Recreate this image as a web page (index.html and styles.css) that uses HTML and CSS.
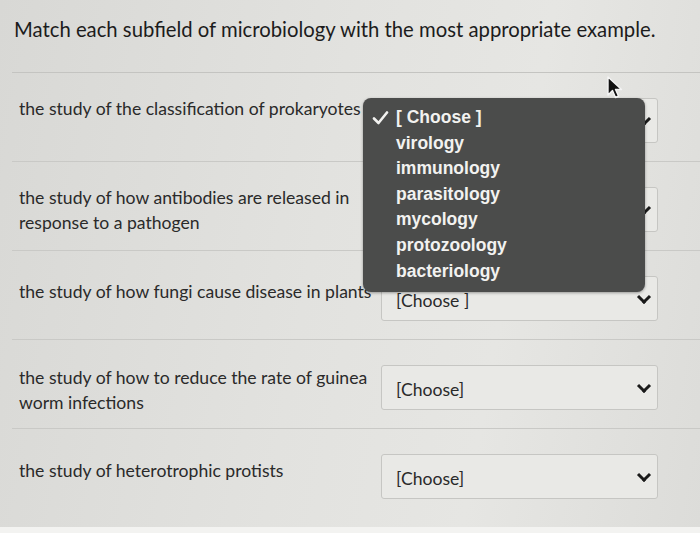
FILE: index.html
```html
<!DOCTYPE html>
<html>
<head>
<meta charset="utf-8">
<link rel="stylesheet" href="styles.css">
</head>
<body>
<div class="page">
  <h1 class="title">Match each subfield of microbiology with the most appropriate example.</h1>
  <div class="list">
    <div class="row">
      <div class="label">the study of the classification of prokaryotes</div>
      <div class="select"><span class="value">[Choose ]</span><span class="chev"></span></div>
    </div>
    <div class="row">
      <div class="label">the study of how antibodies are released in response to a pathogen</div>
      <div class="select"><span class="value">[Choose ]</span><span class="chev"></span></div>
    </div>
    <div class="row">
      <div class="label">the study of how fungi cause disease in plants</div>
      <div class="select"><span class="value">[Choose ]</span><span class="chev"></span></div>
    </div>
    <div class="row">
      <div class="label">the study of how to reduce the rate of guinea worm infections</div>
      <div class="select"><span class="value">[Choose]</span><span class="chev"></span></div>
    </div>
    <div class="row last">
      <div class="label">the study of heterotrophic protists</div>
      <div class="select"><span class="value">[Choose]</span><span class="chev"></span></div>
    </div>
  </div>
  <div class="bottom"></div>

  <ul class="menu">
    <li class="opt"><svg class="check" width="17" height="14" viewBox="0 0 17 14"><path d="M2 7.5 L6.5 12 L15 1.5" fill="none" stroke="#f2f2f0" stroke-width="2.6" stroke-linecap="round" stroke-linejoin="round"/></svg>[ Choose ]</li>
    <li class="opt">virology</li>
    <li class="opt">immunology</li>
    <li class="opt">parasitology</li>
    <li class="opt">mycology</li>
    <li class="opt">protozoology</li>
    <li class="opt">bacteriology</li>
  </ul>

  <svg class="cursor" width="20" height="26" viewBox="0 0 20 26">
    <path d="M3 2 L3 20 L7.5 15.5 L10.5 22.5 L13.5 21 L10.5 14.5 L16.5 14.5 Z" fill="#111" stroke="#f4f4f4" stroke-width="1.4" stroke-linejoin="round"/>
  </svg>
</div>
</body>
</html>
```
FILE: styles.css
```css
html, body {
  margin: 0;
  padding: 0;
}
body {
  width: 700px;
  height: 533px;
  overflow: hidden;
  background: linear-gradient(100deg, #d8d8d5 0%, #e2e2df 45%, #e6e6e3 70%, #dcdcd9 100%);
  font-family: Lato, "Open Sans", sans-serif;
}
.page {
  position: relative;
  height: 533px;
}
.title {
  margin: 0 0 0 12px;
  padding: 17px 0 0 2px;
  height: 73px;
  box-sizing: border-box;
  font-size: 20.3px;
  font-weight: 400;
  color: #1c1c1c;
  border-bottom: 1px solid #c4c4c1;
}
.list {
  padding-left: 12px;
}
.row {
  display: flex;
  align-items: flex-start;
  height: 89px;
  box-sizing: border-box;
  padding: 25px 0 0 7px;
  border-bottom: 1px solid #c9c9c6;
}
.row.last {
  border-bottom: none;
}
.label {
  width: 356px;
  flex: none;
  font-size: 17.6px;
  line-height: 25px;
  color: #2a2a2a;
  margin-right: 6px;
}
.row:nth-child(1) .label { margin-top: -2px; white-space: nowrap; overflow: hidden; }
.row:nth-child(2) .label { margin-top: -2px; }
.row:nth-child(3) .label { margin-top: 3px; white-space: nowrap; overflow: hidden; }
.row:nth-child(4) .label { margin-top: 0; }
.row:nth-child(5) .label { margin-top: 4px; }
.select {
  width: 277px;
  height: 45px;
  box-sizing: border-box;
  border: 1px solid #c6c6c3;
  border-radius: 3px;
  background: #e9e9e6;
  display: flex;
  align-items: center;
  justify-content: space-between;
  padding: 0 8px 0 14px;
}
.value {
  font-size: 17.6px;
  color: #2a2a2a;
  padding-top: 4px;
}
.chev {
  width: 7px;
  height: 7px;
  border-right: 3px solid #1a1a1a;
  border-bottom: 3px solid #1a1a1a;
  transform: rotate(45deg);
  margin-top: -4px;
}
.bottom {
  position: absolute;
  left: 0;
  right: 0;
  bottom: 0;
  height: 6px;
  background: #f3f3f1;
}
.menu {
  position: absolute;
  left: 363px;
  top: 98px;
  width: 282px;
  height: 194px;
  box-sizing: border-box;
  margin: 0;
  padding: 7px 0 0 0;
  list-style: none;
  background: #4b4c4b;
  border-radius: 8px;
  box-shadow: 0 1px 3px rgba(0,0,0,0.35);
  font-family: "Liberation Sans", Arial, sans-serif;
  font-weight: 700;
  font-size: 17.5px;
  color: #f2f2f0;
}
.opt {
  position: relative;
  height: 25.6px;
  line-height: 25.6px;
  padding-left: 33px;
}
.check {
  position: absolute;
  left: 9px;
  top: 6px;
}
.cursor {
  position: absolute;
  left: 605px;
  top: 75px;
}
```
